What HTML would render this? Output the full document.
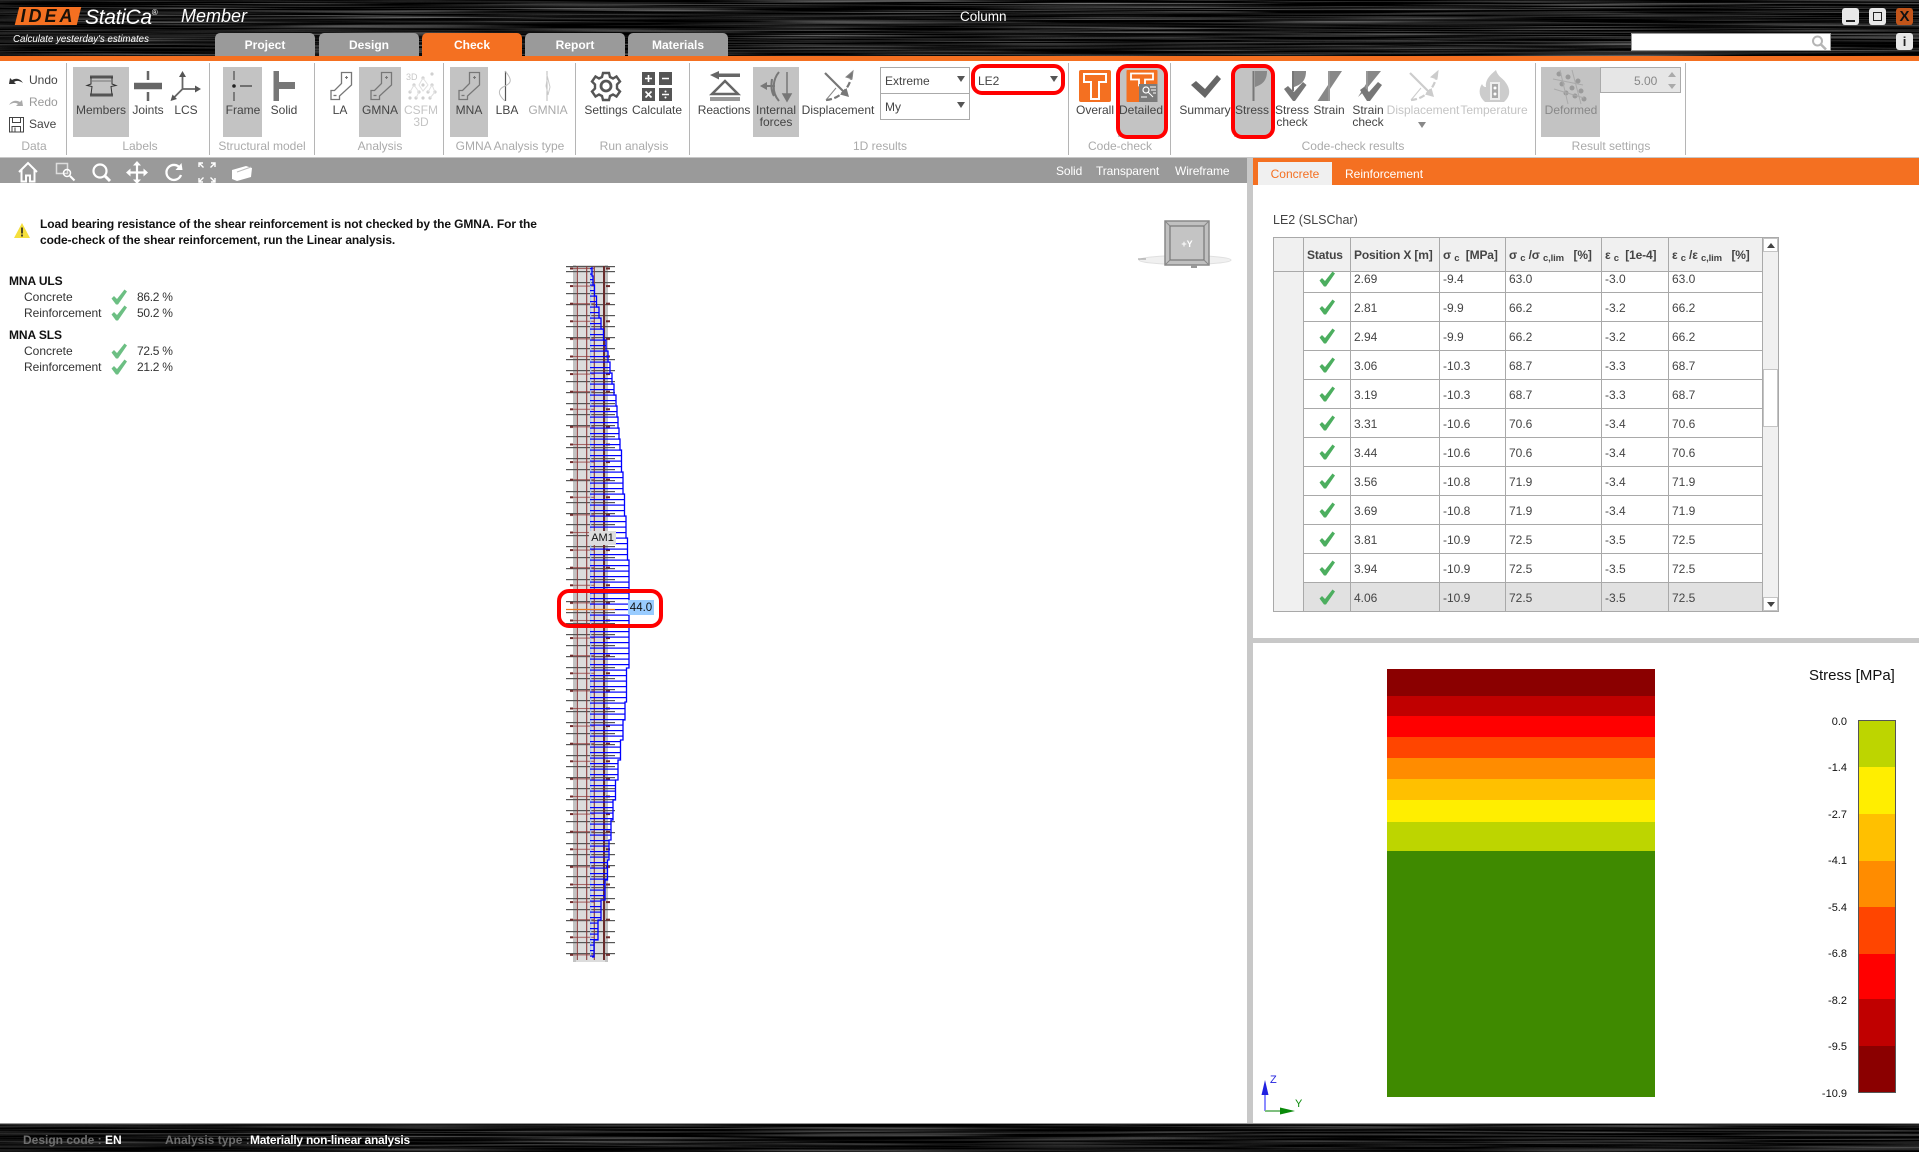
<!DOCTYPE html>
<html lang="en"><head><meta charset="utf-8"><title>Column</title>
<style>
html,body{margin:0;padding:0;background:#fff}
#app{position:relative;width:1919px;height:1152px;overflow:hidden;font:12px/14px "Liberation Sans",sans-serif;color:#444;background:#fff}
.a{position:absolute}
.c{position:absolute;transform:translateX(-50%);text-align:center;white-space:nowrap;line-height:12px}
.g{position:absolute;transform:translateX(-50%);top:139px;color:#aaa;white-space:nowrap}
.d{color:#c4c4c4}
.tab{position:absolute;top:33px;height:23px;width:100px;background:#9a9a9a;border-radius:5px 5px 0 0;color:#fff;font-weight:bold;text-align:center;line-height:24px}
.sep{position:absolute;top:63px;height:92px;width:1px;background:#b5b5b5}
.on{position:absolute;top:67px;height:70px;background:#c3c3c3}
.red{position:absolute;border:4px solid #f00;border-radius:11px;box-sizing:border-box}
.tri{position:absolute;width:0;height:0;border-left:4px solid transparent;border-right:4px solid transparent;border-top:6px solid #555}
.sel{position:absolute;left:880px;width:90px;height:27px;box-sizing:border-box;border:1px solid #aaa;background:#fff;padding:6px 0 0 4px;color:#444}
svg{position:absolute;overflow:visible}
.win{position:absolute;width:17px;height:17px;background:#e8e8e8;border-radius:3px}
.ts{position:absolute;color:#fff;top:164px;white-space:nowrap;letter-spacing:-.1px}
table{position:absolute;left:1273px;top:237px;width:489px;border-collapse:collapse;table-layout:fixed;color:#444;font-size:12px}
td,th{border:1px solid #a9a9a9;padding:0 0 0 3px;text-align:left;white-space:nowrap;box-sizing:border-box;position:relative}
th{background:#f0f0f0;height:34px;font-weight:bold;padding-left:3px;letter-spacing:-.15px}
td{height:29px;padding-top:1px}
sub{font-size:9.500px;line-height:0;vertical-align:-2px}
tr.sl td{background:#e1e1e1}
.lg{position:absolute;right:72px;font:11px/12px "Liberation Sans",sans-serif;color:#111}
</style></head><body>
<div id="app">

<!-- header -->
<svg class="a" style="left:0;top:0" width="1919" height="56"><filter id="s" x="0" y="0" width="100%" height="100%" color-interpolation-filters="sRGB"><feTurbulence type="fractalNoise" baseFrequency="0.004 0.85" numOctaves="2" seed="4"/><feColorMatrix values="1.100 0 0 0 -.47 1.100 0 0 0 -.47 1.100 0 0 0 -.47 0 0 0 0 1"/></filter><filter id="s2" x="0" y="0" width="100%" height="100%" color-interpolation-filters="sRGB"><feTurbulence type="fractalNoise" baseFrequency="0.004 0.6" numOctaves="2" seed="9"/><feColorMatrix values=".8 0 0 0 -.33 .8 0 0 0 -.33 .8 0 0 0 -.33 0 0 0 0 1"/></filter><rect width="1919" height="56" filter="url(#s)"/></svg>
<div class="a" style="left:0;top:56px;width:1919px;height:5px;background:#f47021"></div>

<!-- logo -->
<div class="a" style="left:17px;top:7px;width:62px;height:18px;background:#f47021;transform:skewX(-14deg)"></div>
<div class="a" style="left:17px;top:7px;width:62px;height:18px;color:#1a1108;font:italic bold 18px/18px 'Liberation Sans',sans-serif;letter-spacing:3px;text-align:center">IDEA</div>
<div class="a" style="left:85px;top:1px;color:#fff;font:italic 21px/24px 'Liberation Sans',sans-serif;letter-spacing:-.3px;white-space:nowrap">StatiCa<span style="font-size:8px;vertical-align:9px">®</span></div>
<div class="a" style="left:181px;top:6px;color:#fff;font:italic 18px/20px 'Liberation Sans',sans-serif;white-space:nowrap">Member</div>
<div class="a" style="left:13px;top:34px;color:#fff;font:italic 9.700px/12px 'Liberation Sans',sans-serif;white-space:nowrap">Calculate yesterday's estimates</div>
<div class="a" style="left:960px;top:9px;color:#fff;font-size:13.500px;line-height:16px">Column</div>

<!-- tabs -->
<div class="tab" style="left:215px">Project</div>
<div class="tab" style="left:319px">Design</div>
<div class="tab" style="left:422px;background:#f47021">Check</div>
<div class="tab" style="left:525px">Report</div>
<div class="tab" style="left:628px">Materials</div>

<!-- window controls -->
<div class="win" style="left:1842px;top:8px"><div class="a" style="left:4px;top:12px;width:9px;height:2px;background:#222"></div></div>
<div class="win" style="left:1869px;top:8px"><div class="a" style="left:4px;top:4px;width:7px;height:7px;border:1.500px solid #222"></div></div>
<div class="win" style="left:1896px;top:8px;background:#c2551a;color:#111;font:bold 15px/17px 'Liberation Sans',sans-serif;text-align:center">X</div>
<div class="win" style="left:1896px;top:33px;color:#222;font:bold 13px/17px 'Liberation Sans',sans-serif;text-align:center">i</div>
<div class="a" style="left:1631px;top:33px;width:200px;height:18px;background:#fff;border:1px solid #999;box-sizing:border-box"></div>
<svg style="left:1811px;top:35px" width="17" height="15" fill="none" stroke="#b5b5b5"><circle cx="6.500" cy="6" r="4.500" stroke-width="2"/><path d="M10 9.500l5 5" stroke-width="2.500"/></svg>

<!-- ribbon -->
<div class="a" style="left:0;top:157px;width:1919px;height:1px;background:#c8c8c8"></div>
<div class="sep" style="left:66px"></div><div class="sep" style="left:209px"></div><div class="sep" style="left:314px"></div><div class="sep" style="left:443px"></div><div class="sep" style="left:575px"></div><div class="sep" style="left:689px"></div><div class="sep" style="left:1068px"></div><div class="sep" style="left:1170px"></div><div class="sep" style="left:1535px"></div><div class="sep" style="left:1685px"></div>

<div class="on" style="left:73px;width:56px"></div>
<div class="on" style="left:223px;width:39px"></div>
<div class="on" style="left:359px;width:42px"></div>
<div class="on" style="left:450px;width:38px"></div>
<div class="on" style="left:753px;width:46px"></div>
<div class="on" style="left:1118px;width:46px"></div>
<div class="on" style="left:1234px;width:37px"></div>
<div class="on" style="left:1541px;width:59px"></div>

<div class="a" style="left:29px;top:73px">Undo</div>
<div class="a d" style="left:29px;top:95px;color:#999">Redo</div>
<div class="a" style="left:29px;top:117px">Save</div>

<div class="c" style="left:101px;top:104px">Members</div>
<div class="c" style="left:148px;top:104px">Joints</div>
<div class="c" style="left:186px;top:104px">LCS</div>
<div class="c" style="left:243px;top:104px">Frame</div>
<div class="c" style="left:284px;top:104px">Solid</div>
<div class="c" style="left:340px;top:104px">LA</div>
<div class="c" style="left:380px;top:104px">GMNA</div>
<div class="c d" style="left:421px;top:104px">CSFM<br>3D</div>
<div class="c" style="left:469px;top:104px">MNA</div>
<div class="c" style="left:507px;top:104px">LBA</div>
<div class="c" style="left:548px;top:104px;color:#aaa">GMNIA</div>
<div class="c" style="left:606px;top:104px">Settings</div>
<div class="c" style="left:657px;top:104px">Calculate</div>
<div class="c" style="left:724px;top:104px;letter-spacing:-.1px">Reactions</div>
<div class="c" style="left:776px;top:104px">Internal<br>forces</div>
<div class="c" style="left:838px;top:104px">Displacement</div>
<div class="c" style="left:1095px;top:104px">Overall</div>
<div class="c" style="left:1141px;top:104px">Detailed</div>
<div class="c" style="left:1205px;top:104px">Summary</div>
<div class="c" style="left:1252px;top:104px">Stress</div>
<div class="c" style="left:1292px;top:104px">Stress<br>check</div>
<div class="c" style="left:1329px;top:104px">Strain</div>
<div class="c" style="left:1368px;top:104px">Strain<br>check</div>
<div class="c d" style="left:1423px;top:104px">Displacement</div>
<div class="c d" style="left:1494px;top:104px">Temperature</div>
<div class="c" style="left:1571px;top:104px;color:#888">Deformed</div>

<div class="g" style="left:34px">Data</div>
<div class="g" style="left:140px">Labels</div>
<div class="g" style="left:262px">Structural model</div>
<div class="g" style="left:380px">Analysis</div>
<div class="g" style="left:510px">GMNA Analysis type</div>
<div class="g" style="left:634px">Run analysis</div>
<div class="g" style="left:880px">1D results</div>
<div class="g" style="left:1120px">Code-check</div>
<div class="g" style="left:1353px">Code-check results</div>
<div class="g" style="left:1611px">Result settings</div>

<!-- dropdowns -->
<div class="sel" style="top:67px">Extreme</div>
<div class="sel" style="top:93px">My</div>
<div class="tri" style="left:957px;top:76px"></div>
<div class="tri" style="left:957px;top:102px"></div>
<div class="a" style="left:978px;top:74px">LE2</div>
<div class="tri" style="left:1050px;top:76px"></div>
<div class="a" style="left:1600px;top:67px;width:81px;height:26px;background:#e6e6e6;border:1px solid #aaa;box-sizing:border-box"></div>
<div class="a" style="left:1634px;top:74px;color:#888">5.00</div>
<div class="tri" style="left:1668px;top:72px;border-top:0;border-bottom:5px solid #aaa"></div>
<div class="tri" style="left:1668px;top:84px;border-top:5px solid #aaa"></div>

<!-- ribbon icons -->
<svg style="left:0;top:0" width="1919" height="158">
<defs>
<g id="sec" fill="none"><path d="M11.500 .5H21.500V13L9.500 24V27.500H1V18.500H4.500L11.500 11.500Z" stroke-width="1.300"/><path d="M16.500 4v3M15 5.500h3" stroke-width="1.100"/><path d="M3.500 23.500h3" stroke-width="1.300"/></g>
<path id="chk" d="M.5 9.500 3 7l3 3L13.500.5 16 2.500 7 15.500H5z"/>
</defs>
<!-- undo redo save -->
<path d="M9 84l1-6 2 2c3-2 8-2 11 3-3-2-6-3-9-1l2 2z" fill="#333"/>
<path d="M23 106l-1-6-2 2c-3-2-8-2-11 3 3-2 6-3 9-1l-2 2z" fill="#aaa"/>
<path d="M9.500 117.500h14v14.500h-14zM12.500 117.500v5h8v-5M12 132v-5.500h8.500v5.500M15 127.500v4" fill="none" stroke="#444"/>
<!-- members -->
<path d="M90 77h23M90 95h23" stroke="#555" stroke-width="3"/><path d="M91 77v7l-4 1.500 5 1-1 8M112 77v7l4 1.500-5 1 1 8" fill="none" stroke="#333"/><path d="M90 81h23" stroke="#777"/>
<!-- joints -->
<path d="M134 86h28" stroke="#666" stroke-width="6.500"/><path d="M148 71v9M148 92v9" stroke="#666" stroke-width="2.500"/>
<!-- lcs -->
<path d="M182.500 89V74M182.500 89H198M182.500 89l-10 10" stroke="#666" stroke-width="1.800" fill="none"/><path d="M182.500 71l-3.500 6h7zM201 89l-6-3.500v7zM170.500 101l6.500-2-4.500-4.500z" fill="#555"/>
<!-- frame -->
<path d="M234 71v9M234 92v9" stroke="#333"/><circle cx="234" cy="86" r="1.800" fill="#222"/><path d="M240 86h12" stroke="#444" stroke-width="1.300"/>
<!-- solid -->
<path d="M273.500 71h5.500v11h16v7h-16v12h-5.500z" fill="#777"/>
<!-- sections -->
<use href="#sec" x="330" y="72" stroke="#777"/>
<use href="#sec" x="370" y="72" stroke="#777"/>
<use href="#sec" x="458" y="72" stroke="#777"/>
<!-- csfm -->
<text x="406" y="80" font-size="9" fill="#c8c8c8" font-family="Liberation Sans,sans-serif">3D</text>
<g fill="#d0d0d0"><circle cx="423" cy="78" r="1.600"/><circle cx="432" cy="74" r="1.600"/><circle cx="414" cy="85" r="1.600"/><circle cx="423" cy="85" r="1.600"/><circle cx="432" cy="85" r="1.600"/><circle cx="410" cy="92" r="1.600"/><circle cx="419" cy="92" r="1.600"/><circle cx="428" cy="92" r="1.600"/><circle cx="435" cy="92" r="1.600"/><circle cx="410" cy="98" r="1.600"/><circle cx="416" cy="98" r="1.600"/><circle cx="423" cy="98" r="1.600"/><circle cx="430" cy="98" r="1.600"/></g>
<path d="M410 92l4-7 5 7-3 6M423 78l-4 7 4 6 5-6zM428 92l4-7 3 7-5 6" fill="none" stroke="#e0e0e0"/>
<!-- lba gmnia -->
<path d="M505.500 71v30" stroke="#555" stroke-width="1.200"/><path d="M505 71c7 8 7 12 0 15s-8 8 0 15" fill="none" stroke="#bbb"/>
<path d="M547 71v30" stroke="#bbb"/><path d="M547 75l3 12-2 8M547 80l-1 6 2 8" fill="none" stroke="#ccc"/>
<!-- gear -->
<g fill="none" stroke="#555"><circle cx="606" cy="86" r="5" stroke-width="2.800"/><path d="M603 73h6l1 4 3 1.500 3.500-2 3.500 5-3 3v4l3 3-3.500 5-3.500-2-3 1.500-1 4h-6l-1-4-3-1.500-3.500 2-3.500-5 3-3v-4l-3-3 3.500-5 3.500 2 3-1.500z" stroke-width="2.400"/></g>
<!-- calculate -->
<g fill="#555"><rect x="642" y="72" width="13" height="13"/><rect x="659" y="72" width="13" height="13"/><rect x="642" y="88" width="13" height="13"/><rect x="659" y="88" width="13" height="13"/></g>
<path d="M645 78.500h7M648.500 75v7M662 78.500h7M645.500 91.500l6 6M651.500 91.500l-6 6M662 94.500h7" stroke="#fff" stroke-width="1.600"/><circle cx="665.500" cy="91.500" r="1" fill="#fff"/><circle cx="665.500" cy="97.500" r="1" fill="#fff"/>
<!-- reactions -->
<path d="M710 75l9-4v2.500h21v3.500h-21v2.500z" fill="#666"/><path d="M725 81l13 13h-26z" fill="none" stroke="#666" stroke-width="2.500"/><rect x="710" y="97" width="30" height="4" fill="#999"/>
<!-- internal forces -->
<path d="M760 86l7-4v3h8v2h-8v3z" fill="#777"/><path d="M787 72v24M787 101l-4-7h8z" fill="#777" stroke="#777" stroke-width="1.500"/><path d="M779 72c-6 7-8 20 0 29M772 79c-1 6-1 12 2 17" fill="none" stroke="#777" stroke-width="2"/>
<!-- displacement -->
<path d="M825 73l19 19" stroke="#777" stroke-width="2.200"/><path d="M849 97l-9-2.500 6.500-6.500z" fill="#777"/>
<path d="M826 100C840 99 850 88 852 74" fill="none" stroke="#777" stroke-width="2.200" stroke-dasharray="6 2.500"/><path d="M853 71l-7 6 6 2zM826 100l10-12" fill="#777" stroke="#888"/>
<!-- overall -->
<rect x="1079" y="70" width="32" height="32" rx="2" fill="#f47021"/>
<path d="M1084 74h22v8h-7v17h-8V82h-7z" fill="#f47021" stroke="#fff" stroke-width="2"/>
<!-- detailed -->
<rect x="1126.500" y="70" width="31" height="32" rx="1" fill="#f47021"/>
<path d="M1131 73.500h22v6h-8v6h-6v-6h-8z" fill="#f47021" stroke="#fff" stroke-width="1.800"/>
<rect x="1139" y="84" width="18.500" height="18" fill="#7b7b7b"/><circle cx="1146" cy="90" r="3" fill="none" stroke="#fff" stroke-width="1.200"/><path d="M1148 92l5 5M1150 87h6M1151 90h5M1153 93h3M1141 97h6" stroke="#fff"/>
<!-- summary -->
<path d="M1191 85l5-4 9 8 12-14 4 4-16 19z" fill="#666"/>
<!-- stress -->
<path d="M1253.500 71v30" stroke="#777" stroke-width="2"/><path d="M1255 71h12c0 8-3 13-12 16z" fill="#888"/>
<!-- stress check -->
<path d="M1293 71v20" stroke="#777" stroke-width="2"/><path d="M1294 71h12c0 8-3 13-12 16z" fill="#888"/>
<path d="M1284 89l4-3 6 6 9-10 3.500 3L1295 101h-2z" fill="#777"/>
<!-- strain -->
<path d="M1329 71v30" stroke="#777" stroke-width="1.500"/><path d="M1330 71h12l-12 18zM1328 85v16h-10.500z" fill="#888"/>
<!-- strain check -->
<path d="M1367 71v20" stroke="#777" stroke-width="1.500"/><path d="M1368 71h13l-13 16zM1366 84v6l-8 7z" fill="#888"/>
<path d="M1360 90l4-3 5 5 9-10 4 3-12 16h-3z" fill="#777"/>
<!-- displacement disabled -->
<path d="M1410 73l19 19" stroke="#ccc" stroke-width="2.200"/><path d="M1434 97l-9-2.500 6.500-6.500z" fill="#ccc"/>
<path d="M1411 100C1425 99 1435 88 1437 74" fill="none" stroke="#ccc" stroke-width="2.200" stroke-dasharray="6 2.500"/><path d="M1438 71l-7 6 6 2zM1411 100l10-12" fill="#ccc" stroke="#ccc"/>
<path d="M1418 122l4 6 4-6z" fill="#888"/>
<!-- temperature -->
<path d="M1496 70c2 7 7 8 10 13 5 7 4 14-2 19h-19c-6-5-7-12-3-18 1 2 2 3 4 3-1-7 4-12 10-17z" fill="#ccc"/><rect x="1490" y="82" width="10" height="18" fill="#eee"/><rect x="1492" y="84" width="6" height="14" fill="#aaa"/><circle cx="1495" cy="88" r="1.500" fill="#fff"/><circle cx="1495" cy="94" r="1.500" fill="#fff"/>
<!-- deformed -->
<g fill="#9a9a9a"><circle cx="1559" cy="74" r="2.500"/><circle cx="1568" cy="77" r="2.500"/><circle cx="1578" cy="81" r="2.500"/><circle cx="1562" cy="84" r="2.500"/><circle cx="1572" cy="88" r="2.500"/><circle cx="1581" cy="91" r="2.500"/><circle cx="1566" cy="93" r="2.500"/><circle cx="1575" cy="96" r="2.500"/><circle cx="1584" cy="99" r="2.500"/></g>
<path d="M1553 79l30 6M1554 89l30 9M1560 70l8 34M1572 70l9 34" stroke="#aaa" fill="none"/>
</svg>

<!-- highlight boxes -->
<div class="red" style="left:971px;top:64px;width:94px;height:31px"></div>
<div class="red" style="left:1116px;top:64px;width:52px;height:75px"></div>
<div class="red" style="left:1231px;top:64px;width:44px;height:75px"></div>

<!-- toolbar -->
<div class="a" style="left:0;top:158px;width:1247px;height:25px;background:#9a9a9a"></div>
<div class="ts" style="left:1056px">Solid</div>
<div class="ts" style="left:1096px">Transparent</div>
<div class="ts" style="left:1175px">Wireframe</div>
<svg style="left:0;top:158px" width="260" height="25" fill="none" stroke="#fff">
<path d="M19 14l9-9 9 9M21.500 12v11.500h4.500v-6h4v6h4.500V12" stroke-width="2"/>
<path d="M56.500 5.500h11v10h-11z" stroke="#ddd" stroke-width="1.500"/><circle cx="67" cy="15" r="3.500" stroke-width="1.500"/><path d="M70 18l4.500 4.500" stroke-width="2"/>
<circle cx="100" cy="13" r="6.500" stroke-width="2.200"/><path d="M105 18l5 5" stroke-width="3"/>
<path d="M137 6v17M128 14.500h18" stroke-width="2.200"/><path d="M137 3l-4 4.500h8zM137 26l-4-4.500h8zM126 14.500l4.500-4v8zM148 14.500l-4.500-4v8z" fill="#fff" stroke="none"/>
<path d="M180 10a7.500 7.500 0 1 0 1 7" stroke-width="2.300"/><path d="M181.500 5l1 7h-7z" fill="#fff" stroke="none"/>
<path d="M199 9V5h4M215 9V5h-4M199 20v4h4M215 20v4h-4M199 5l4.500 4.500M215 5l-4.500 4.500M199 24l4.500-4.500M215 24l-4.500-4.500" stroke-width="1.400"/>
<path d="M232 12l14-4 6 2-1 9-14 4-5-2z" fill="#fff" stroke="none"/><path d="M237 14l14-5" stroke="#bbb"/>
</svg>

<!-- splitters -->
<div class="a" style="left:1247px;top:158px;width:6px;height:965px;background:#c8c8c8"></div>
<div class="a" style="left:1253px;top:638px;width:666px;height:5px;background:#c8c8c8"></div>

<!-- warning -->
<svg style="left:14px;top:223px" width="17" height="15"><path d="M8 0l8 15H0z" fill="#f5df3c"/><path d="M7.200 4.500h1.600v6H7.200zM7.200 11.500h1.600v2H7.200z" fill="#222"/></svg>
<div class="a" style="left:40px;top:216px;color:#111;font-weight:bold;line-height:16px;white-space:nowrap;letter-spacing:-.1px">Load bearing resistance of the shear reinforcement is not checked by the GMNA. For the<br>code-check of the shear reinforcement, run the Linear analysis.</div>

<!-- results summary -->
<div class="a" style="left:9px;top:274px;color:#111;font-weight:bold;letter-spacing:-.1px">MNA ULS</div>
<div class="a" style="left:24px;top:290px;color:#333">Concrete</div>
<div class="a" style="left:24px;top:306px;color:#333;letter-spacing:-.05px">Reinforcement</div>
<div class="a" style="left:137px;top:290px;color:#333;letter-spacing:-.3px">86.2 %</div>
<div class="a" style="left:137px;top:306px;color:#333;letter-spacing:-.3px">50.2 %</div>
<div class="a" style="left:9px;top:328px;color:#111;font-weight:bold;letter-spacing:-.1px">MNA SLS</div>
<div class="a" style="left:24px;top:344px;color:#333">Concrete</div>
<div class="a" style="left:24px;top:360px;color:#333;letter-spacing:-.05px">Reinforcement</div>
<div class="a" style="left:137px;top:344px;color:#333;letter-spacing:-.3px">72.5 %</div>
<div class="a" style="left:137px;top:360px;color:#333;letter-spacing:-.3px">21.2 %</div>
<svg style="left:111px;top:289px" width="17" height="16" fill="#6cbf83"><use href="#chk"/></svg>
<svg style="left:111px;top:305px" width="17" height="16" fill="#6cbf83"><use href="#chk"/></svg>
<svg style="left:111px;top:343px" width="17" height="16" fill="#6cbf83"><use href="#chk"/></svg>
<svg style="left:111px;top:359px" width="17" height="16" fill="#6cbf83"><use href="#chk"/></svg>

<!-- nav cube -->
<svg style="left:1130px;top:215px" width="110" height="60">
<ellipse cx="55" cy="45" rx="46" ry="4.500" fill="#f0f0f0" stroke="#e0e0e0"/><path d="M8 44h8" stroke="#999"/>
<rect x="35" y="6" width="44" height="44" fill="#c0c0c0" stroke="#888" stroke-width="1.500"/><rect x="40" y="11" width="34" height="34" fill="#c4c4c4" stroke="#777" stroke-width="1.200"/><path d="M35 6l5 5M79 6l-5 5M35 50l5-5M79 50l-5-5" stroke="#888"/>
<rect x="61" y="50" width="6" height="3" fill="#999"/>
<text x="57" y="32" text-anchor="middle" font-size="9" font-weight="bold" fill="#fff" font-family="Liberation Sans,sans-serif">+Y</text>
</svg>

<!-- column model -->
<svg style="left:0;top:0" width="700" height="1000">
<defs>
<pattern id="pt" patternUnits="userSpaceOnUse" x="0" y="271" width="60" height="11"><rect width="60" height="1.200" fill="#555"/></pattern>
<pattern id="pb" patternUnits="userSpaceOnUse" x="0" y="268" width="60" height="5.500"><rect width="60" height="1.200" fill="#00f"/></pattern>
<pattern id="pr" patternUnits="userSpaceOnUse" x="0" y="266" width="40" height="17.600"><rect x="6" y="2" width="28" height="1" fill="#a05a5a"/><rect x="6" y="1.500" width="7" height="2" fill="#6e2b2b"/></pattern>
<clipPath id="cb"><path d="M592 267V276H593V285H594.500V296H596.500V307H599V318H601V329H603.500V340H606V351H608V362H610V373H612V384H614V395H616V406H617V417H618V428H619V439H620V450H621.500V472H623V494H624.500V516H626V538H627.500V560H629V668H626.500V702H625V720H623V740H620.500V760H618V780H615.500V800H613V820H611V840H609V860H607.500V880H605V900H601V920H598V940H594V957H592H590V267Z"/></clipPath>
</defs>
<rect x="573" y="265" width="35" height="697" fill="#dcdcdc"/>
<path d="M574.500 265v697M606.500 265v697" stroke="#c2c2c2" stroke-width="3"/>
<rect x="573" y="266" width="35" height="1.500" fill="#bbb"/>
<rect x="566" y="271" width="49" height="684" fill="url(#pt)"/>
<rect x="566" y="266" width="49" height="1.200" fill="#555"/>
<rect x="570" y="266" width="40" height="690" fill="url(#pr)"/>
<path d="M590.700 268v688" stroke="#a9c5ee" stroke-width="1.200"/>
<path d="M577.300 266v694M586.700 266v694M594.300 266v694" stroke="#8a3a3a" stroke-width="1.100"/>
<path d="M604 266v694" stroke="#6a2d2d" stroke-width="2"/>
<rect x="590" y="267" width="42" height="690" fill="url(#pb)" clip-path="url(#cb)"/>
<path d="M592 267V276H593V285H594.500V296H596.500V307H599V318H601V329H603.500V340H606V351H608V362H610V373H612V384H614V395H616V406H617V417H618V428H619V439H620V450H621.500V472H623V494H624.500V516H626V538H627.500V560H629V668H626.500V702H625V720H623V740H620.500V760H618V780H615.500V800H613V820H611V840H609V860H607.500V880H605V900H601V920H598V940H594V957H592" fill="none" stroke="#00f" stroke-width="1.300"/>
<path d="M566 609.500h49" stroke="#e8761e" stroke-width="1.200"/>
</svg>
<div class="a" style="left:589px;top:531px;width:27px;height:14px;background:#ddd;color:#111;text-align:center;font-size:11px">AM1</div>
<div class="a" style="left:628px;top:600px;width:26px;height:15px;background:#9cf;color:#111;text-align:center;font-size:11.500px;line-height:16px">44.0</div>
<div class="red" style="left:557px;top:589px;width:106px;height:39px;border-radius:12px"></div>

<!-- right panel tabs -->
<div class="a" style="left:1253px;top:158px;width:666px;height:27px;background:#f47021"></div>
<div class="a" style="left:1258px;top:162px;width:74px;height:23px;background:#f0f0f0;color:#f47021;text-align:center;line-height:24px">Concrete</div>
<div class="a" style="left:1345px;top:167px;color:#fff">Reinforcement</div>

<!-- table -->
<div class="a" style="left:1273px;top:213px;color:#444;font-size:12.500px">LE2 (SLSChar)</div>
<div class="a" style="left:1273px;top:237px;width:506px;height:375px;border:1px solid #a9a9a9;box-sizing:border-box;background:#f0f0f0"></div>
<table>
<colgroup><col style="width:30px"><col style="width:47px"><col style="width:89px"><col style="width:66px"><col style="width:96px"><col style="width:67px"><col style="width:94px"></colgroup>
<tr><th></th><th>Status</th><th>Position X [m]</th><th>σ <sub>c</sub>&nbsp; [MPa]</th><th>σ <sub>c</sub> /σ <sub>c,lim</sub> &nbsp; [%]</th><th>ε <sub>c</sub>&nbsp; [1e-4]</th><th>ε <sub>c</sub> /ε <sub>c,lim</sub> &nbsp; [%]</th></tr>
<tr style="background:#fff"><td rowspan="13" style="background:#f0f0f0"></td><td style="height:21px;padding:0"><svg style="left:15px;top:0" width="16" height="15" fill="#4cae5f"><use href="#chk" y="-1"/></svg></td><td style="height:21px;padding:0 0 6px 3px">2.69</td><td style="height:21px;padding:0 0 6px 3px">-9.4</td><td style="height:21px;padding:0 0 6px 3px">63.0</td><td style="height:21px;padding:0 0 6px 3px">-3.0</td><td style="height:21px;padding:0 0 6px 3px">63.0</td></tr>
<tr style="background:#fff"><td><svg style="left:15px;top:6px" width="16" height="16" fill="#4cae5f"><use href="#chk"/></svg></td><td>2.81</td><td>-9.9</td><td>66.2</td><td>-3.2</td><td>66.2</td></tr>
<tr style="background:#fff"><td><svg style="left:15px;top:6px" width="16" height="16" fill="#4cae5f"><use href="#chk"/></svg></td><td>2.94</td><td>-9.9</td><td>66.2</td><td>-3.2</td><td>66.2</td></tr>
<tr style="background:#fff"><td><svg style="left:15px;top:6px" width="16" height="16" fill="#4cae5f"><use href="#chk"/></svg></td><td>3.06</td><td>-10.3</td><td>68.7</td><td>-3.3</td><td>68.7</td></tr>
<tr style="background:#fff"><td><svg style="left:15px;top:6px" width="16" height="16" fill="#4cae5f"><use href="#chk"/></svg></td><td>3.19</td><td>-10.3</td><td>68.7</td><td>-3.3</td><td>68.7</td></tr>
<tr style="background:#fff"><td><svg style="left:15px;top:6px" width="16" height="16" fill="#4cae5f"><use href="#chk"/></svg></td><td>3.31</td><td>-10.6</td><td>70.6</td><td>-3.4</td><td>70.6</td></tr>
<tr style="background:#fff"><td><svg style="left:15px;top:6px" width="16" height="16" fill="#4cae5f"><use href="#chk"/></svg></td><td>3.44</td><td>-10.6</td><td>70.6</td><td>-3.4</td><td>70.6</td></tr>
<tr style="background:#fff"><td><svg style="left:15px;top:6px" width="16" height="16" fill="#4cae5f"><use href="#chk"/></svg></td><td>3.56</td><td>-10.8</td><td>71.9</td><td>-3.4</td><td>71.9</td></tr>
<tr style="background:#fff"><td><svg style="left:15px;top:6px" width="16" height="16" fill="#4cae5f"><use href="#chk"/></svg></td><td>3.69</td><td>-10.8</td><td>71.9</td><td>-3.4</td><td>71.9</td></tr>
<tr style="background:#fff"><td><svg style="left:15px;top:6px" width="16" height="16" fill="#4cae5f"><use href="#chk"/></svg></td><td>3.81</td><td>-10.9</td><td>72.5</td><td>-3.5</td><td>72.5</td></tr>
<tr style="background:#fff"><td><svg style="left:15px;top:6px" width="16" height="16" fill="#4cae5f"><use href="#chk"/></svg></td><td>3.94</td><td>-10.9</td><td>72.5</td><td>-3.5</td><td>72.5</td></tr>
<tr class="sl"><td><svg style="left:15px;top:6px" width="16" height="16" fill="#4cae5f"><use href="#chk"/></svg></td><td>4.06</td><td>-10.9</td><td>72.5</td><td>-3.5</td><td>72.5</td></tr>
</table>
<!-- scrollbar -->
<div class="a" style="left:1763px;top:238px;width:15px;height:14px;background:#fff;border:1px solid #c4c4c4;box-sizing:border-box"></div>
<div class="tri" style="left:1767px;top:243px;border-top:0;border-bottom:5px solid #444"></div>
<div class="a" style="left:1763px;top:369px;width:15px;height:58px;background:#fff;border:1px solid #c4c4c4;box-sizing:border-box"></div>
<div class="a" style="left:1763px;top:597px;width:15px;height:14px;background:#fff;border:1px solid #c4c4c4;box-sizing:border-box"></div>
<div class="tri" style="left:1767px;top:602px;border-top:5px solid #444"></div>

<!-- stress section -->
<div class="a" style="left:1387px;top:669px;width:268px;height:27px;background:#8b0000"></div>
<div class="a" style="left:1387px;top:696px;width:268px;height:20px;background:#c00000"></div>
<div class="a" style="left:1387px;top:716px;width:268px;height:21px;background:#f00"></div>
<div class="a" style="left:1387px;top:737px;width:268px;height:21px;background:#ff4500"></div>
<div class="a" style="left:1387px;top:758px;width:268px;height:21px;background:#ff8c00"></div>
<div class="a" style="left:1387px;top:779px;width:268px;height:21px;background:#ffc000"></div>
<div class="a" style="left:1387px;top:800px;width:268px;height:22px;background:#ffee00"></div>
<div class="a" style="left:1387px;top:822px;width:268px;height:29px;background:#bdd500"></div>
<div class="a" style="left:1387px;top:851px;width:268px;height:246px;background:#3f8a00"></div>

<!-- legend -->
<div class="a" style="left:1809px;top:667px;color:#111;font-size:15px;line-height:18px;white-space:nowrap">Stress [MPa]</div>
<svg style="left:1858px;top:720px" width="38" height="373">
<rect width="38" height="47" fill="#bdd500"/><rect y="47" width="38" height="47" fill="#ffee00"/><rect y="94" width="38" height="47" fill="#ffc000"/><rect y="141" width="38" height="46" fill="#ff8c00"/><rect y="187" width="38" height="47" fill="#ff4500"/><rect y="234" width="38" height="45" fill="#f00"/><rect y="279" width="38" height="47" fill="#c00000"/><rect y="326" width="38" height="47" fill="#8b0000"/><rect x=".5" y=".5" width="37" height="372" fill="none" stroke="#555"/>
</svg>
<div class="lg" style="top:716px">0.0</div>
<div class="lg" style="top:762px">-1.4</div>
<div class="lg" style="top:809px">-2.7</div>
<div class="lg" style="top:855px">-4.1</div>
<div class="lg" style="top:902px">-5.4</div>
<div class="lg" style="top:948px">-6.8</div>
<div class="lg" style="top:995px">-8.2</div>
<div class="lg" style="top:1041px">-9.5</div>
<div class="lg" style="top:1088px">-10.9</div>

<!-- axes -->
<svg style="left:1255px;top:1070px" width="55" height="50">
<path d="M10 41V16" stroke="#8c8cff" stroke-width="2"/><path d="M10 10l-3.500 15h7z" fill="#2020e0"/>
<path d="M10 41h26" stroke="#7fbf7f" stroke-width="2"/><path d="M40 41l-15-3.500v7z" fill="#0a8a0a"/>
<text x="15" y="13" font-size="11" fill="#2222dd" font-family="Liberation Sans,sans-serif">Z</text>
<text x="40" y="37" font-size="11" fill="#0a8a0a" font-family="Liberation Sans,sans-serif">Y</text>
</svg>

<!-- status bar -->
<svg class="a" style="left:0;top:1123px" width="1919" height="29"><rect width="1919" height="29" filter="url(#s2)"/><rect width="1919" height="1" fill="#999"/></svg>
<div class="a" style="left:23px;top:1133px;color:#6e6e6e;font-weight:bold">Design code :</div>
<div class="a" style="left:105px;top:1133px;color:#fff;font-weight:bold">EN</div>
<div class="a" style="left:165px;top:1133px;color:#6e6e6e;font-weight:bold">Analysis type :</div>
<div class="a" style="left:250px;top:1133px;color:#fff;font-weight:bold;white-space:nowrap;letter-spacing:-.25px">Materially non-linear analysis</div>

</div></body></html>
